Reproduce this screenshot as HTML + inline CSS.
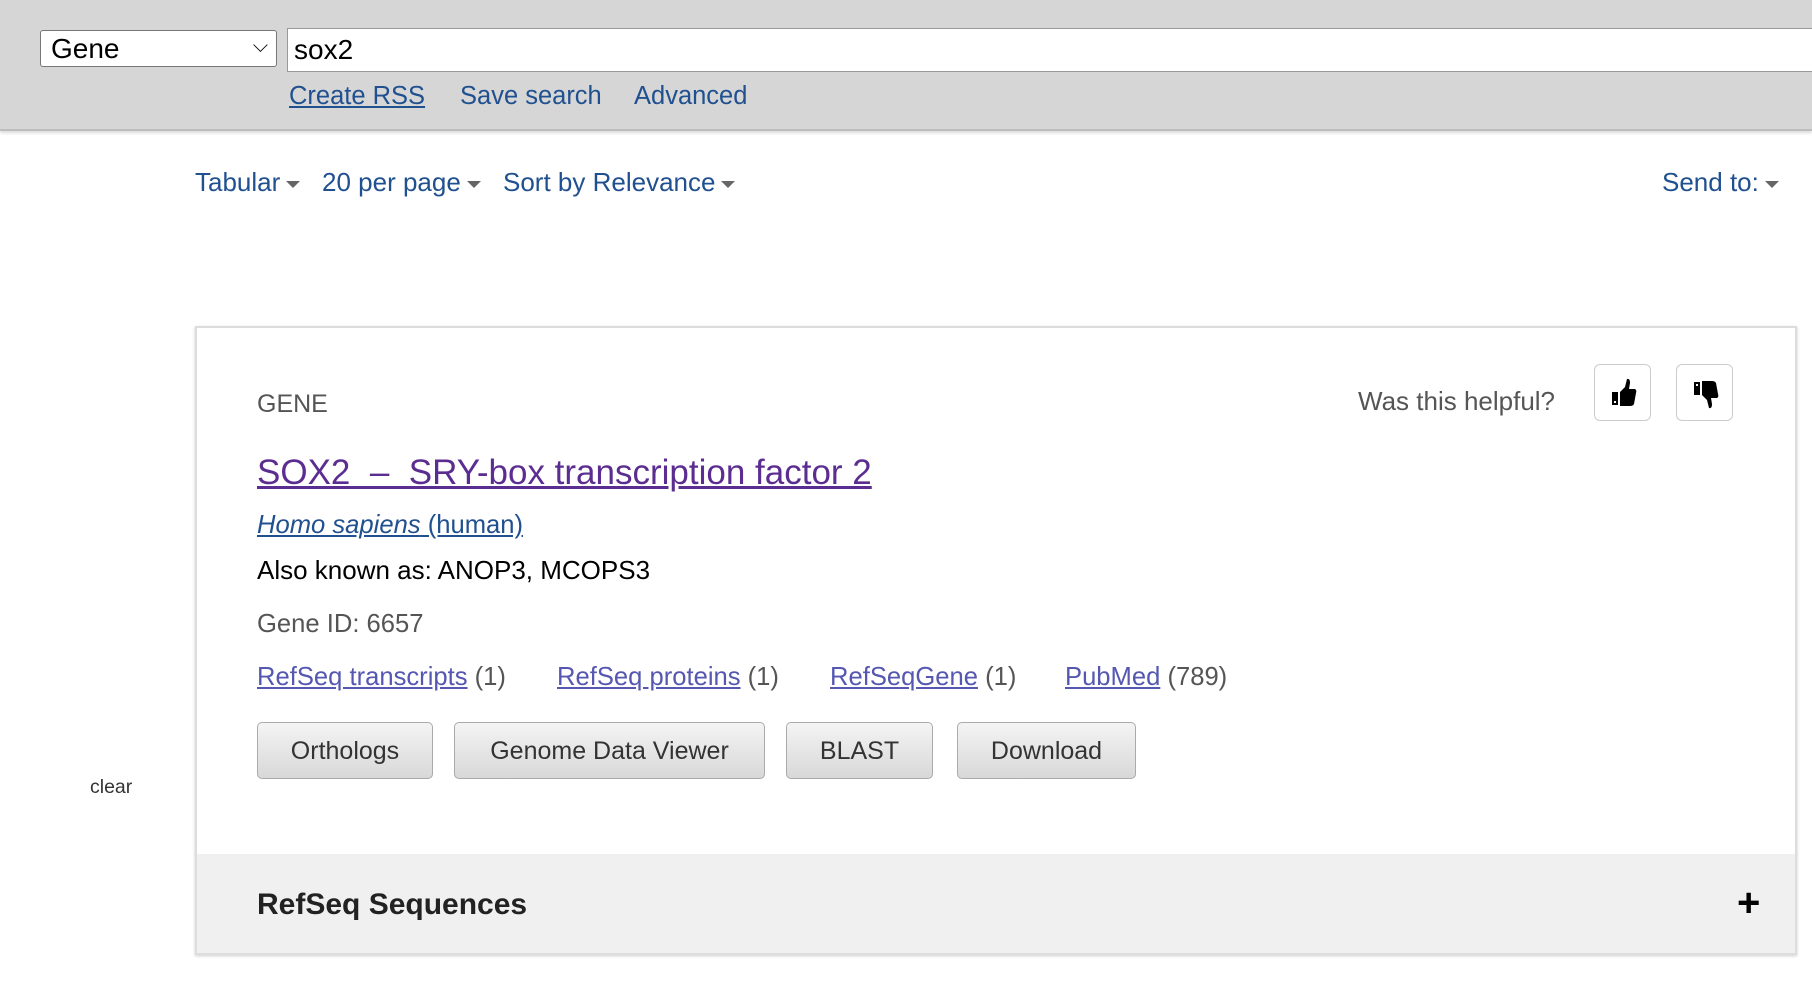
<!DOCTYPE html>
<html><head><meta charset="utf-8"><style>
*{box-sizing:border-box;margin:0;padding:0}
body{width:1812px;height:992px;overflow:hidden;background:#fff;font-family:"Liberation Sans",Arial,sans-serif;position:relative}
.a{position:absolute;white-space:nowrap}
#hdr{position:absolute;left:0;top:0;width:1812px;height:131px;background:#d6d6d6;border-bottom:2px solid #bdbdbd;box-shadow:0 2px 3px rgba(0,0,0,.15)}
#sel{left:40px;top:30px;width:237px;height:37px;background:#fff;border:1px solid #777;border-radius:3px;font-size:28px;padding:2px 10px;line-height:31px}
#inp{left:287px;top:28px;width:1540px;height:44px;background:#fff;border:1px solid #999;font-size:28px;padding:4px 6px;line-height:34px}
.hl{font-size:25.5px;color:#20508f;top:82px}
.tb{font-size:26px;color:#20508f;top:167px}
.tri{display:inline-block;width:0;height:0;border-left:7px solid transparent;border-right:7px solid transparent;border-top:7px solid #666;margin-left:6px;vertical-align:middle}
#card{position:absolute;left:195px;top:326px;width:1602px;height:629px;border:2px solid #ddd;box-shadow:0 1px 3px rgba(0,0,0,.2);background:#fff}
#foot{position:absolute;left:0;bottom:0;width:100%;height:99px;background:#f0f0f0}
.btn{position:absolute;top:722px;height:57px;border:1px solid #aaa;border-radius:5px;background:linear-gradient(#f4f4f4,#d8d8d8);font-size:25px;color:#333;text-align:center;line-height:57px}
.th{position:absolute;top:364px;width:57px;height:57px;border:1px solid #ccc;border-radius:6px;background:#fff}
.lk{color:#5557b0;text-decoration:underline}
.gr{color:#555}
.f{font-size:25.6px}
</style></head><body>
<div id="hdr"></div>
<div class="a" id="sel">Gene<span style="position:absolute;right:8px;top:0;font-size:20px">&#x2335;</span></div>
<div class="a" id="inp">sox2</div>
<div class="a hl" style="left:289px;text-decoration:underline">Create RSS</div>
<div class="a hl" style="left:460px">Save search</div>
<div class="a hl" style="left:634px">Advanced</div>
<div class="a tb" style="left:195px">Tabular<span class="tri"></span></div>
<div class="a tb" style="left:322px">20 per page<span class="tri"></span></div>
<div class="a tb" style="left:503px">Sort by Relevance<span class="tri"></span></div>
<div class="a tb" style="left:1662px">Send to:<span class="tri"></span></div>
<div id="card"><div id="foot"></div></div>
<div class="a gr" style="left:257px;top:390px;font-size:25px">GENE</div>
<div class="a gr" style="left:1358px;top:386px;font-size:26px">Was this helpful?</div>
<div class="th" style="left:1594px"><svg width="57" height="57" viewBox="0 0 57 57"><rect x="17" y="27" width="6" height="13" fill="#000"/><path d="M25 27 L30 22 L32 14 Q35 13 35 18 L34 24 L40 24 Q42 25 41 28 L39 39 Q38 41 35 41 L25 41Z" fill="#000"/><rect x="19" y="36" width="2" height="2" fill="#fff"/></svg></div>
<div class="th" style="left:1676px"><svg width="57" height="57" viewBox="0 0 57 57"><g transform="translate(0,57) scale(1,-1)"><rect x="17" y="27" width="6" height="13" fill="#000"/><path d="M25 27 L30 22 L32 14 Q35 13 35 18 L34 24 L40 24 Q42 25 41 28 L39 39 Q38 41 35 41 L25 41Z" fill="#000"/><rect x="19" y="36" width="2" height="2" fill="#fff"/></g></svg></div>
<div class="a" style="left:257px;top:453px;font-size:35px;color:#5c2d91;text-decoration:underline">SOX2 &nbsp;–&nbsp; SRY-box transcription factor 2</div>
<div class="a f" style="left:257px;top:511px;color:#20508f;text-decoration:underline"><i>Homo sapiens</i> (human)</div>
<div class="a f" style="left:257px;top:555px;color:#000;font-size:26px">Also known as: ANOP3, MCOPS3</div>
<div class="a gr f" style="left:257px;top:610px">Gene ID: 6657</div>
<div class="a f" style="left:257px;top:663px"><span class="lk">RefSeq transcripts</span> <span class="gr">(1)</span></div>
<div class="a f" style="left:557px;top:663px"><span class="lk">RefSeq proteins</span> <span class="gr">(1)</span></div>
<div class="a f" style="left:830px;top:663px"><span class="lk">RefSeqGene</span> <span class="gr">(1)</span></div>
<div class="a f" style="left:1065px;top:663px"><span class="lk">PubMed</span> <span class="gr">(789)</span></div>
<div class="btn" style="left:257px;width:176px">Orthologs</div>
<div class="btn" style="left:454px;width:311px">Genome Data Viewer</div>
<div class="btn" style="left:786px;width:147px">BLAST</div>
<div class="btn" style="left:957px;width:179px">Download</div>
<div class="a" style="left:90px;top:776px;font-size:19.5px;color:#333">clear</div>
<div class="a" style="left:257px;top:888px;font-size:30px;font-weight:bold;color:#222">RefSeq Sequences</div>
<div class="a" style="left:1737px;top:881px;font-size:40px;font-weight:bold;color:#000">+</div>
</body></html>
